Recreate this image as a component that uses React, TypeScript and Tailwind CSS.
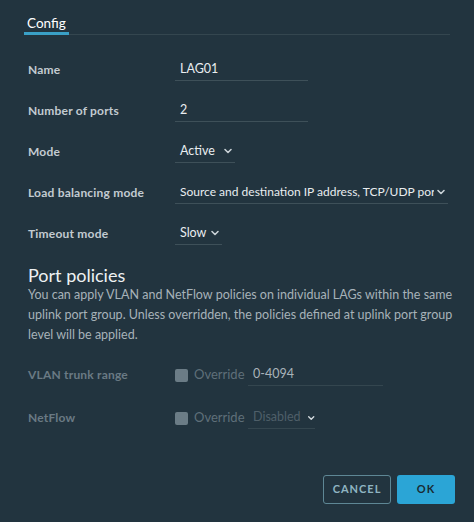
import React from "react";

const Chevron = ({ className = "" }: { className?: string }) => (
  <svg viewBox="0 0 10 10" className={className} fill="none" stroke="currentColor" strokeWidth="1.6" strokeLinecap="round" strokeLinejoin="round">
    <path d="M2 3.5 L5 6.5 L8 3.5" />
  </svg>
);

const Label = ({ children, dim = false }: { children: React.ReactNode; dim?: boolean }) => (
  <div className={`w-[147px] shrink-0 text-[12px] font-bold tracking-[0.2px] ${dim ? "text-[#6a7a84]" : "text-[#c3cbd1]"}`}>{children}</div>
);

export default function App() {
  return (
    <div className="w-[474px] h-[522px] bg-[#22343f] flex flex-col font-['Lato',sans-serif] text-[#e9edf0]">
      <div className="mx-[24px] mt-[14px] flex border-b border-[#34464f]">
        <div className="px-[3px] leading-[18px] border-b-[3px] border-[#3aa0c6] -mb-px text-[13.5px] text-white">Config</div>
      </div>
      <div className="pl-[28px] pt-[14px] flex flex-col">
        <div className="h-[41px] flex items-center">
          <Label>Name</Label>
          <div className="w-[133px] h-[22px] flex items-center pl-[5px] border-b border-[#3e5059] text-[12.5px]">LAG01</div>
        </div>
        <div className="h-[41px] flex items-center">
          <Label>Number of ports</Label>
          <div className="w-[133px] h-[22px] flex items-center pl-[5px] border-b border-[#3e5059] text-[12.5px]">2</div>
        </div>
        <div className="h-[41px] flex items-center">
          <Label>Mode</Label>
          <div className="w-[60px] h-[22px] flex items-center pl-[5px] border-b border-[#3e5059] text-[12.5px]">
            Active<Chevron className="w-[10px] h-[10px] ml-[8px] text-[#c9d1d6]" />
          </div>
        </div>
        <div className="h-[41px] flex items-center">
          <Label>Load balancing mode</Label>
          <div className="w-[273px] h-[22px] flex items-center pl-[5px] border-b border-[#3e5059] text-[12px] whitespace-nowrap">
            <span className="w-[254px] overflow-hidden">Source and destination IP address, TCP/UDP port</span>
            <Chevron className="w-[10px] h-[10px] ml-[2px] text-[#c9d1d6]" />
          </div>
        </div>
        <div className="h-[41px] flex items-center">
          <Label>Timeout mode</Label>
          <div className="w-[47px] h-[22px] flex items-center pl-[5px] border-b border-[#3e5059] text-[12.5px]">
            Slow<Chevron className="w-[10px] h-[10px] ml-[4px] text-[#c9d1d6]" />
          </div>
        </div>
        <div className="mt-[11px] text-[18px] leading-[20px] text-[#eef1f3]">Port policies</div>
        <div className="text-[12.5px] leading-[20px] text-[#a7b2b9] whitespace-nowrap">
          You can apply VLAN and NetFlow policies on individual LAGs within the same<br />
          uplink port group. Unless overridden, the policies defined at uplink port group<br />
          level will be applied.
        </div>
        <div className="mt-[9px] h-[42px] flex items-center">
          <Label dim>VLAN trunk range</Label>
          <div className="w-[13px] h-[13px] rounded-[2px] bg-[#6b7c86]" />
          <div className="ml-[6px] w-[54px] text-[13px] text-[#5f6f79]">Override</div>
          <div className="w-[135px] h-[22px] flex items-center pl-[5px] border-b border-[#34464f] text-[12.5px] text-[#a9b3ba]">0-4094</div>
        </div>
        <div className="h-[44px] flex items-center">
          <Label dim>NetFlow</Label>
          <div className="w-[13px] h-[13px] rounded-[2px] bg-[#6b7c86]" />
          <div className="ml-[6px] w-[54px] text-[13px] text-[#5f6f79]">Override</div>
          <div className="w-[67px] h-[22px] flex items-center pl-[5px] border-b border-[#34464f] text-[12.5px] text-[#4f5f69]">
            Disabled<Chevron className="w-[10px] h-[10px] ml-[6px] text-[#d5dce0]" />
          </div>
        </div>
      </div>
      <div className="mt-auto mb-[18px] mr-[19px] flex justify-end gap-[6px]">
        <button className="w-[68px] h-[29px] rounded-[3px] border border-[#5e8795] text-[#8fb4c2] text-[11px] font-bold tracking-[1px]">CANCEL</button>
        <button className="w-[58px] h-[29px] rounded-[3px] bg-[#2ba5d6] text-[#1a2b33] text-[11px] font-bold tracking-[1px]">OK</button>
      </div>
    </div>
  );
}
